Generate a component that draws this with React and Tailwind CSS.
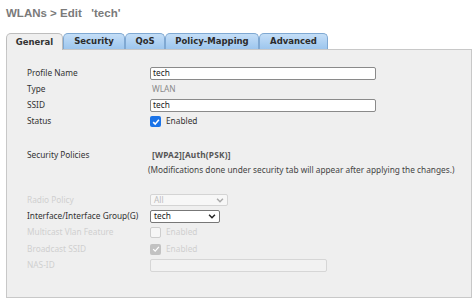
import React from 'react';

const font = { fontFamily: '"Noto Sans", Tahoma, sans-serif' };
const tabFont = { fontFamily: '"DejaVu Sans", Verdana, sans-serif' };

const Tab = ({ label, active, w }) => (
  <div
    className={`flex items-center justify-center text-[8.5px] font-bold rounded-t-[5px] border border-b-0 ${
      active
        ? 'bg-[#efefef] border-[#bdbdbd] text-[#333] h-[17px] -mb-px relative'
        : 'h-[16px] bg-gradient-to-b from-[#c4def7] to-[#9dc6ee] border-[#7fa8d2] text-[#2b2b2b]'
    }`}
    style={{ width: w, ...tabFont }}
  >
    {label}
  </div>
);

const Chevron = ({ color }) => (
  <svg width="8" height="5" viewBox="0 0 9 6" className="shrink-0">
    <path d="M1 1 L4.5 4.5 L8 1" fill="none" stroke={color} strokeWidth="1.8" />
  </svg>
);

const Check = ({ disabled }) => (
  <svg width="8" height="8" viewBox="0 0 10 10">
    <path d="M1.5 5.2 L4 7.7 L8.6 2.3" fill="none" stroke="#fff" strokeWidth={disabled ? 1.6 : 2} />
  </svg>
);

const Row = ({ label, h, dim, children }) => (
  <div className="flex items-center" style={{ height: h }}>
    <div className={`w-[123px] shrink-0 whitespace-nowrap ${dim ? 'text-[#cfcfcf]' : 'text-[#333]'}`}>{label}</div>
    <div className="flex items-center">{children}</div>
  </div>
);

export default function App() {
  return (
    <div className="w-[474px] h-[300px] bg-white overflow-hidden text-[8.3px]" style={font}>
      <div
        className="pl-[6px] pt-[5px] h-[33px] text-[11.5px] font-bold text-[#7a7a7a]"
        style={{ fontFamily: '"Liberation Sans", Arial, sans-serif' }}
      >
        WLANs &gt; Edit &nbsp;&nbsp;'tech'
      </div>
      <div className="flex items-end pl-[6px] h-[16px]">
        <Tab label="General" active w={57} />
        <Tab label="Security" w={62} />
        <Tab label="QoS" w={40} />
        <Tab label="Policy-Mapping" w={94} />
        <Tab label="Advanced" w={69} />
      </div>
      <div className="ml-[6px] w-[466px] h-[249px] bg-[#efefef] border border-[#c8c8c8] pt-[15px] pl-[20px]">
        <Row label="Profile Name" h={16}>
          <div className="w-[226px] h-[13px] bg-white border border-[#8a8a8a] rounded-[2px] flex items-center pl-[2px] text-[#222]">tech</div>
        </Row>
        <Row label="Type" h={16}>
          <span className="pl-[2px] text-[#8a8a8a]">WLAN</span>
        </Row>
        <Row label="SSID" h={16}>
          <div className="w-[226px] h-[13px] bg-white border border-[#8a8a8a] rounded-[2px] flex items-center pl-[2px] text-[#222]">tech</div>
        </Row>
        <Row label="Status" h={17}>
          <div className="w-[11px] h-[11px] rounded-[2px] bg-[#1a73e8] flex items-center justify-center">
            <Check />
          </div>
          <span className="ml-[5px] text-[#333]">Enabled</span>
        </Row>
        <div className="h-[17px]" />
        <Row label="Security Policies" h={16}>
          <span className="font-bold text-[#555] pl-[2px] tracking-[0.2px]">[WPA2][Auth(PSK)]</span>
        </Row>
        <div className="flex items-center h-[15px] pl-[121px] text-[#444] whitespace-nowrap">
          (Modifications done under security tab will appear after applying the changes.)
        </div>
        <div className="h-[14px]" />
        <Row label="Radio Policy" h={16} dim>
          <div className="w-[78px] h-[12px] bg-[#f7f7f7] border border-[#d4d4d4] rounded-[2px] flex items-center justify-between px-[3px] text-[#bdbdbd]">
            All
            <Chevron color="#a9a9a9" />
          </div>
        </Row>
        <Row label="Interface/Interface Group(G)" h={16}>
          <div className="w-[70px] h-[13px] bg-white border border-[#777] rounded-[2px] flex items-center justify-between px-[3px] text-[#222]">
            tech
            <Chevron color="#222" />
          </div>
        </Row>
        <Row label="Multicast Vlan Feature" h={17} dim>
          <div className="w-[11px] h-[11px] rounded-[2px] border border-[#cdcdcd] bg-[#f6f6f6]" />
          <span className="ml-[5px] text-[#cfcfcf]">Enabled</span>
        </Row>
        <Row label="Broadcast SSID" h={16} dim>
          <div className="w-[11px] h-[11px] rounded-[2px] bg-[#c2c2c2] flex items-center justify-center">
            <Check disabled />
          </div>
          <span className="ml-[5px] text-[#cfcfcf]">Enabled</span>
        </Row>
        <Row label="NAS-ID" h={16} dim>
          <div className="w-[177px] h-[13px] bg-[#f2f2f2] border border-[#d6d6d6] rounded-[2px]" />
        </Row>
      </div>
    </div>
  );
}
